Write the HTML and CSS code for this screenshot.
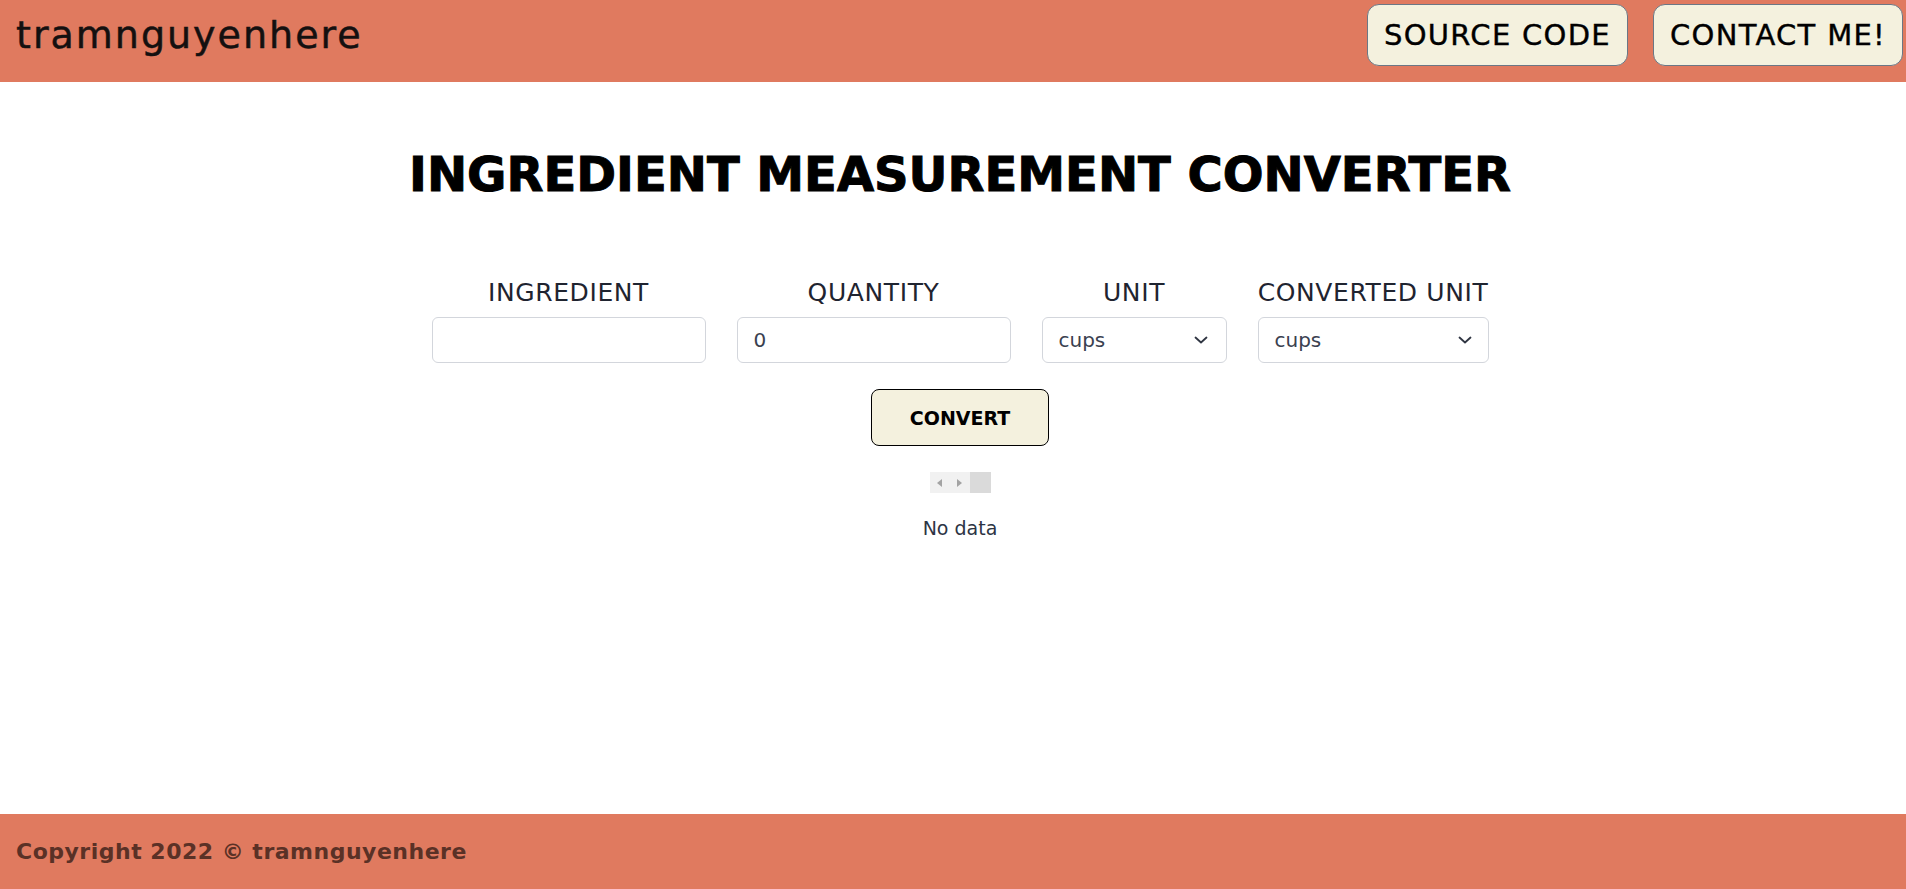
FILE: index.html
```html
<!DOCTYPE html>
<html lang="en">
<head>
<meta charset="utf-8">
<title>Ingredient Measurement Converter</title>
<link rel="stylesheet" href="styles.css">
</head>
<body>
<header class="topbar">
  <div class="brand">tramnguyenhere</div>
  <nav class="actions">
    <a class="pill" href="#">SOURCE CODE</a>
    <a class="pill" href="#">CONTACT ME!</a>
  </nav>
</header>

<main class="page">
  <h1 class="title">INGREDIENT MEASUREMENT CONVERTER</h1>

  <form class="converter">
    <div class="field">
      <label class="field-label" for="ingredient">INGREDIENT</label>
      <input class="control" id="ingredient" type="text">
    </div>
    <div class="field">
      <label class="field-label" for="quantity">QUANTITY</label>
      <input class="control" id="quantity" type="text" value="0">
    </div>
    <div class="field">
      <label class="field-label" for="unit">UNIT</label>
      <div class="select-wrap">
        <select class="control select" id="unit">
          <option>cups</option>
          <option>grams</option>
          <option>ounces</option>
        </select>
        <svg class="chev" width="14" height="8" viewBox="0 0 14 8"><path d="M1.5 1.5l5.5 5 5.5-5" fill="none" stroke="#2f3542" stroke-width="1.8" stroke-linecap="round" stroke-linejoin="round"/></svg>
      </div>
    </div>
    <div class="field">
      <label class="field-label" for="converted">CONVERTED UNIT</label>
      <div class="select-wrap">
        <select class="control select" id="converted">
          <option>cups</option>
          <option>grams</option>
          <option>ounces</option>
        </select>
        <svg class="chev chev-tight" width="14" height="8" viewBox="0 0 14 8"><path d="M1.5 1.5l5.5 5 5.5-5" fill="none" stroke="#2f3542" stroke-width="1.8" stroke-linecap="round" stroke-linejoin="round"/></svg>
      </div>
    </div>
  </form>

  <button class="convert-btn" type="button">CONVERT</button>

  <div class="hscroll">
    <div class="hscroll-btn"><span class="arrow arrow-left"></span></div>
    <div class="hscroll-btn"><span class="arrow arrow-right"></span></div>
    <div class="hscroll-thumb"></div>
  </div>

  <p class="empty">No data</p>
</main>

<footer class="site-footer">Copyright 2022 © tramnguyenhere</footer>
</body>
</html>
```
FILE: styles.css
```css
* { box-sizing: border-box; }

html, body { height: 100%; }

body {
  margin: 0;
  min-height: 100vh;
  display: flex;
  flex-direction: column;
  font-family: "DejaVu Sans", "Liberation Sans", sans-serif;
  color: #1f2430;
  background: #ffffff;
}

/* ---------- header ---------- */
.topbar {
  height: 82px;
  flex: none;
  background: #e07a5f;
  display: flex;
  align-items: flex-start;
  justify-content: space-between;
  padding: 4px 3px 0 16px;
}

.brand {
  font-size: 38px;
  line-height: 62px;
  letter-spacing: 2px;
  color: #141010;
  -webkit-text-stroke: 0.5px #141010;
}

.actions {
  display: flex;
  gap: 25px;
}

.pill {
  height: 62px;
  display: flex;
  align-items: center;
  padding: 0 16px;
  background: #f4f1de;
  border: 1px solid #6b7785;
  border-radius: 12px;
  color: #000;
  text-decoration: none;
  font-size: 29px;
  letter-spacing: 1.3px;
  -webkit-text-stroke: 0.4px #000;
}

/* ---------- main ---------- */
.page {
  flex: 1;
  display: flex;
  flex-direction: column;
  align-items: center;
  padding: 63px 0 0 14px;
}

.title {
  margin: 0;
  font-size: 48px;
  line-height: 58px;
  font-weight: 700;
  color: #000;
  -webkit-text-stroke: 1px #000;
}

.converter {
  margin-top: 75px;
  display: grid;
  grid-template-columns: 274px 274px 185px 231px;
  column-gap: 31px;
}

.field {
  display: flex;
  flex-direction: column;
  align-items: stretch;
  gap: 10px;
}

.field-label {
  text-align: center;
  font-size: 25px;
  line-height: 29px;
  letter-spacing: 0.6px;
  color: #1f2430;
  white-space: nowrap;
}

.control {
  height: 46px;
  width: 100%;
  border: 1px solid #d3d6dc;
  border-radius: 6px;
  padding: 0 16px;
  font-family: inherit;
  font-size: 20px;
  color: #3a4150;
  background: #fff;
  outline: none;
}

.select-wrap {
  position: relative;
}

.select {
  appearance: none;
  -webkit-appearance: none;
  cursor: pointer;
}

.chev {
  position: absolute;
  right: 19px;
  top: 19px;
  pointer-events: none;
}

.chev-tight {
  right: 17px;
}

.convert-btn {
  margin-top: 26px;
  width: 178px;
  height: 57px;
  background: #f4f1de;
  border: 1px solid #000;
  border-radius: 8px;
  font-family: inherit;
  font-size: 19px;
  font-weight: 700;
  color: #000;
  cursor: pointer;
}

/* tiny horizontal scrollbar of the empty result table */
.hscroll {
  margin-top: 26px;
  display: flex;
  height: 21px;
}

.hscroll-btn {
  width: 20px;
  background: #f1f1f1;
  display: flex;
  align-items: center;
  justify-content: center;
}

.arrow {
  width: 0;
  height: 0;
  border-top: 4px solid transparent;
  border-bottom: 4px solid transparent;
}

.arrow-left { border-right: 5px solid #a3a3a3; }
.arrow-right { border-left: 5px solid #a3a3a3; }

.hscroll-thumb {
  width: 21px;
  background: #dadada;
}

.empty {
  margin: 24px 0 0;
  font-size: 19px;
  line-height: 22px;
  color: #2c3444;
}

/* ---------- footer ---------- */
.site-footer {
  flex: none;
  height: 75px;
  background: #e07a5f;
  display: flex;
  align-items: center;
  padding: 0 16px;
  font-size: 22px;
  font-weight: 700;
  letter-spacing: 0.5px;
  color: #5a3126;
}
```
